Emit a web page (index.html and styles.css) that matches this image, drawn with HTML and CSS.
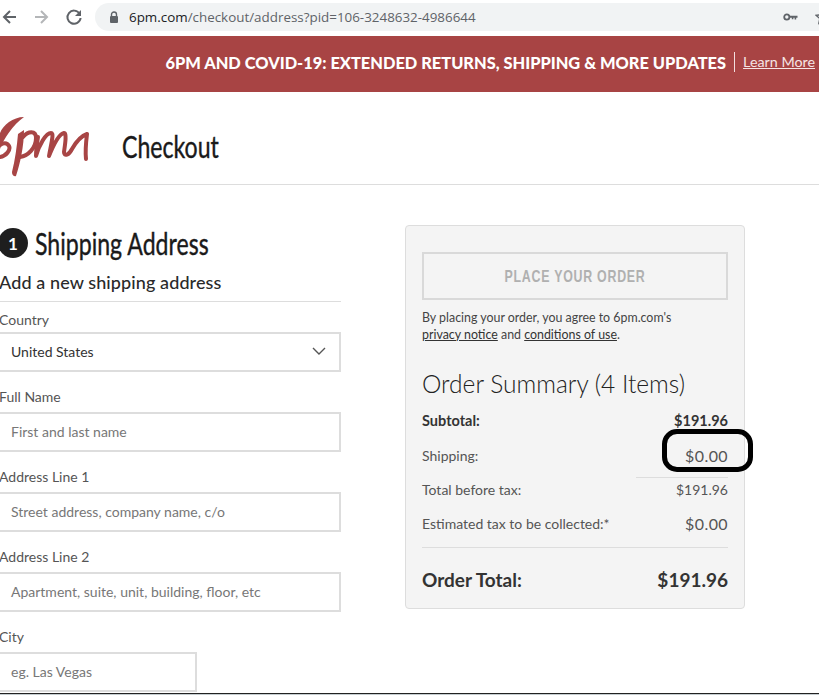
FILE: index.html
```html
<!DOCTYPE html>
<html lang="en">
<head>
    <meta charset="UTF-8">
    <title>6pm Checkout</title>
    <link rel="stylesheet" href="styles.css">
</head>
<body>
    <div class="browser-bar">
        <svg class="nav-icon" width="18" height="18" viewBox="0 0 18 18"><path d="M15 9H3M9 3L3 9l6 6" fill="none" stroke="#5f6368" stroke-width="2"/></svg>
        <svg class="nav-icon" width="18" height="18" viewBox="0 0 18 18"><path d="M2 9h12M8 3l6 6-6 6" fill="none" stroke="#b4b6b8" stroke-width="2"/></svg>
        <svg class="nav-icon" width="18" height="18" viewBox="0 0 18 18"><path d="M14.500 5.500A6.600 6.600 0 1 0 15.600 10" fill="none" stroke="#5f6368" stroke-width="2"/><path d="M16 2v6h-6z" fill="#5f6368"/></svg>
        <div class="url-bar">
            <svg class="lock" width="10" height="12" viewBox="0 0 10 12"><path d="M2.500 5V3.500a2.500 2.500 0 0 1 5 0V5" fill="none" stroke="#5f6368" stroke-width="1.400"/><rect x="1" y="5" width="8" height="7" rx="1" fill="#5f6368"/></svg>
            <span class="url"><span class="url-host">6pm.com</span>/checkout/address?pid=106-3248632-4986644</span>
            <svg class="key" width="15" height="8" viewBox="0 0 15 8"><circle cx="3.800" cy="4" r="2.600" fill="none" stroke="#5f6368" stroke-width="1.800"/><path d="M6 2.800h8.500v2h-1.300v1.800h-1.600V4.800h-1.200v1.400H8.800V4.800H6z" fill="#5f6368"/></svg>
            <svg class="star" width="16" height="16" viewBox="0 0 16 16"><path d="M8 1.500l2 4.300 4.700.6-3.500 3.200.9 4.700L8 12l-4.100 2.300.9-4.700L1.300 6.400 6 5.800z" fill="none" stroke="#5f6368" stroke-width="1.400"/></svg>
        </div>
    </div>

    <div class="banner">
        <strong>6PM AND COVID-19: EXTENDED RETURNS, SHIPPING &amp; MORE UPDATES</strong>
        <a class="banner-link" href="#">Learn More</a>
    </div>

    <header class="site-header">
        <!-- viewBox uses page coordinates so the logo can be traced from the screenshot -->
        <svg class="logo" width="92" height="92" viewBox="0 92 92 92">
            <g fill="#a84545">
                <path d="M24 117C13 117 3 125 0 133V149C4 138 13 125 24 117Z"/>
                <path d="M18 134L24 130C24 146 20 164 16 176C13 177 12 174 12 172C15 160 17 146 18 134Z"/>
            </g>
            <g fill="none" stroke="#a84545" stroke-linecap="round" stroke-linejoin="round" stroke-width="4">
                <path d="M0 157C6 156 11 150 9 146C7 142 3 143 0 145"/>
                <path d="M23 137C28 131 36 130 36 138C36 148 28 156 20 157"/>
                <path d="M38 137C37 143 36 150 36 156C39 145 46 133 51 133C54 133 52 140 49 156C53 146 59 134 64 133C67 133 65 145 64 152C64 157 69 155 72 149C76 142 81 136 87 134C86 142 85 150 86 159"/>
            </g>
        </svg>
        <h1 class="page-title"><span class="condensed">Checkout</span></h1>
    </header>

    <main class="checkout">
        <section class="address-col">
            <h2 class="step-title"><span class="step-num">1</span><span class="condensed">Shipping Address</span></h2>
            <h3 class="sub-title">Add a new shipping address</h3>
            <div class="field field-first">
                <label>Country</label>
                <div class="box box-select">United States
                    <svg width="14" height="8" viewBox="0 0 14 8"><path d="M1 1l6 6 6-6" fill="none" stroke="#555" stroke-width="1.400"/></svg>
                </div>
            </div>
            <div class="field">
                <label>Full Name</label>
                <div class="box placeholder">First and last name</div>
            </div>
            <div class="field">
                <label>Address Line 1</label>
                <div class="box placeholder">Street address, company name, c/o</div>
            </div>
            <div class="field">
                <label>Address Line 2</label>
                <div class="box placeholder">Apartment, suite, unit, building, floor, etc</div>
            </div>
            <div class="field">
                <label>City</label>
                <div class="box box-short placeholder">eg. Las Vegas</div>
            </div>
        </section>

        <aside class="summary">
            <button class="place-order"><span class="place-order-text">PLACE YOUR ORDER</span></button>
            <p class="agree">By placing your order, you agree to 6pm.com's<br><a href="#">privacy notice</a> and <a href="#">conditions of use</a>.</p>
            <h2 class="summary-title">Order Summary (4 Items)</h2>
            <div class="row row-bold"><span>Subtotal:</span><span>$191.96</span></div>
            <div class="row"><span>Shipping:</span><span class="zero circled">$0.00</span></div>
            <div class="row row-before-tax"><span>Total before tax:</span><span>$191.96</span></div>
            <div class="row"><span>Estimated tax to be collected:*</span><span class="zero">$0.00</span></div>
            <div class="row row-total"><span>Order Total:</span><span>$191.96</span></div>
        </aside>
    </main>
    <div class="bottom-line"></div>
</body>
</html>
```

FILE: styles.css
```css
html, body {
    margin: 0;
    height: 695px;
    overflow: hidden;
}
body {
    font-family: 'Lato', sans-serif;
    background-color: #fff;
    color: #2a2a2a;
    position: relative;
}
.browser-bar {
    display: flex;
    align-items: center;
    height: 36px;
    padding-left: 1px;
    padding-bottom: 2px;
    box-sizing: border-box;
}
.nav-icon {
    margin-right: 14px;
    flex: none;
}
.url-bar {
    display: flex;
    align-items: center;
    flex: 1;
    min-width: 0;
    height: 28px;
    margin-left: -2px;
    padding-left: 14px;
    box-sizing: border-box;
    border-radius: 14px 0 0 14px;
    background-color: #f1f3f4;
}
.lock {
    flex: none;
}
.url {
    margin-left: 10px;
    font-family: 'Open Sans', sans-serif;
    font-size: 13.400px;
    color: #5f6368;
    flex: 1;
}
.url-host {
    color: #202124;
}
.key {
    flex: none;
}
.star {
    margin-left: 17px;
    margin-right: -12px;
    flex: none;
}
.banner {
    display: flex;
    align-items: center;
    justify-content: flex-end;
    height: 56px;
    padding-right: 4px;
    padding-bottom: 4px;
    box-sizing: border-box;
    background-color: #a84444;
    color: #fff;
    font-size: 16.400px;
}
.banner strong {
    font-weight: 900;
    white-space: nowrap;
}
.banner-link {
    margin-left: 8px;
    padding-left: 8px;
    border-left: 1px solid #f3dede;
    color: #f6e4e4;
    font-size: 14.300px;
    line-height: 20px;
    white-space: nowrap;
}
.site-header {
    display: flex;
    align-items: center;
    height: 93px;
    box-sizing: border-box;
    border-bottom: 1px solid #ddd;
    overflow: hidden;
}
.logo {
    flex: none;
}
.condensed {
    display: inline-block;
    white-space: nowrap;
    transform: scaleX(0.77);
    transform-origin: left center;
    -webkit-text-stroke: 0.4px #1a1a1a;
}
.page-title {
    margin: 16px 0 0 30px;
    font-weight: 400;
    font-size: 30px;
    color: #1a1a1a;
}
.checkout {
    display: flex;
    align-items: flex-start;
    padding-top: 40px;
}
.address-col {
    width: 341px;
    flex: none;
}
.step-title {
    display: flex;
    align-items: center;
    height: 36px;
    margin: 0;
    font-weight: 400;
    font-size: 30px;
    color: #1a1a1a;
}
.step-num {
    display: flex;
    align-items: center;
    justify-content: center;
    width: 30px;
    height: 30px;
    margin-left: -2px;
    margin-right: 7px;
    border-radius: 50%;
    background-color: #1e1e1e;
    color: #fff;
    font-weight: 700;
    font-size: 17px;
    flex: none;
}
.sub-title {
    margin: 9px 0 0 -1px;
    padding-bottom: 7px;
    border-bottom: 1px solid #ddd;
    font-size: 18px;
    font-weight: 500;
    line-height: 24px;
    letter-spacing: 0.1px;
}
.field {
    margin-top: 15px;
}
.field-first {
    margin-top: 8px;
}
.field label {
    display: block;
    height: 25px;
    margin-left: -1px;
    font-size: 14px;
    line-height: 20px;
    color: #555;
}
.field-first label {
    height: 22px;
}
.box {
    display: flex;
    align-items: center;
    height: 40px;
    padding-left: 11px;
    padding-bottom: 2px;
    box-sizing: border-box;
    border: 2px solid #ddd;
    border-left: none;
    font-size: 14px;
}
.box-select {
    justify-content: space-between;
    padding-right: 13px;
    color: #333;
}
.box-short {
    width: 197px;
}
.placeholder {
    color: #777;
}
.summary {
    width: 340px;
    height: 384px;
    margin-left: 64px;
    padding: 26px 16px 0;
    box-sizing: border-box;
    border: 1px solid #ddd;
    border-radius: 4px;
    background-color: #f4f4f4;
    flex: none;
}
.place-order {
    display: block;
    width: 100%;
    height: 48px;
    border: 2px solid #d9d9d9;
    background: none;
    color: #b0b0b0;
    font-family: 'Liberation Sans', sans-serif;
    font-weight: 700;
    font-size: 16.500px;
    letter-spacing: 1px;
}
.place-order-text {
    display: inline-block;
    white-space: nowrap;
    transform: scaleX(0.75);
}
.agree {
    margin: 10px 0 0;
    font-size: 12.400px;
    line-height: 16.500px;
    color: #444;
}
.agree a {
    color: #333;
}
.summary-title {
    margin: 25px 0 3px;
    font-size: 24.500px;
    font-weight: 300;
    line-height: 32px;
    color: #222;
    white-space: nowrap;
}
.row {
    display: flex;
    justify-content: space-between;
    align-items: center;
    height: 34px;
    font-size: 14px;
    color: #555;
}
.row-bold {
    height: 35px;
    font-size: 14.500px;
    font-weight: 700;
    color: #333;
}
.zero {
    font-size: 16px;
    letter-spacing: 0.400px;
}
.row-before-tax {
    position: relative;
}
.row-before-tax::before {
    content: "";
    position: absolute;
    top: 5px;
    right: 0;
    width: 92px;
    border-top: 1px solid #ddd;
}
.circled {
    position: relative;
}
.circled::after {
    content: "";
    position: absolute;
    top: -17px;
    right: -25px;
    width: 91px;
    height: 43px;
    box-sizing: border-box;
    border: 5px solid #000;
    border-radius: 15px;
}
.row-total {
    height: 62px;
    border-top: 1px solid #ddd;
    margin-top: 7px;
    font-size: 19px;
    font-weight: 700;
    color: #333;
}
.bottom-line {
    position: absolute;
    left: 0;
    right: 0;
    top: 693px;
    height: 1px;
    background-color: #222;
    border-bottom: 1px solid #c5cdd0;
}
```
